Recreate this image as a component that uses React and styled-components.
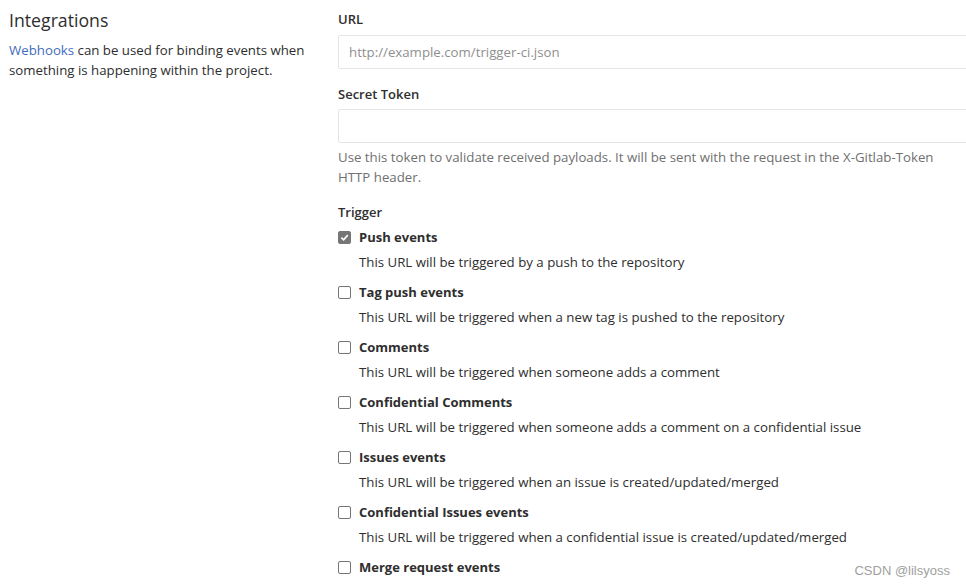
import React from "react";
import styled, { createGlobalStyle } from "styled-components";

const GlobalStyle = createGlobalStyle`
    html, body {
        margin: 0;
        padding: 0;
        background: #fff;
        overflow: hidden;
    }
    body {
        font-family: "Open Sans", "Noto Sans", sans-serif;
        font-size: 13.25px;
        color: #2e2e2e;
    }
`;

const Page = styled.div`
    display: grid;
    grid-template-columns: 329px 660px;
    padding-left: 9px;
    box-sizing: border-box;
    width: 966px;
    height: 586px;
    overflow: hidden;
    position: relative;
`;

const Aside = styled.div`
    padding-top: 8px;
`;

const Heading = styled.h4`
    margin: 0 0 8px;
    font-size: 17.7px;
    line-height: 24px;
    font-weight: 400;
    color: #2e2e2e;
`;

const Lead = styled.p`
    margin: 0;
    line-height: 20px;
    width: 310px;
`;

const Link = styled.a`
    color: #3f6dbf;
    text-decoration: none;
`;

const Form = styled.div`
    padding-top: 9px;
`;

const Group = styled.div`
    margin-bottom: 15px;
`;

const Label = styled.label`
    display: block;
    font-size: 13px;
    font-weight: 600;
    line-height: 20px;
    margin-bottom: ${(p) => p.$gap || 6}px;
`;

const Input = styled.input`
    display: block;
    box-sizing: border-box;
    width: 100%;
    height: 34px;
    padding: 0 10px;
    border: 1px solid #e5e5e5;
    border-radius: 2px;
    font-family: inherit;
    font-size: 13.25px;
    color: #2e2e2e;
    outline: none;
    &::placeholder {
        color: #8f8f8f;
    }
`;

const Help = styled.p`
    margin: 4px 0 0;
    line-height: 20px;
    color: #707070;
    width: 610px;
`;

const TriggerTitle = styled.div`
    font-size: 13px;
    font-weight: 600;
    line-height: 20px;
    margin-bottom: 5px;
`;

const Item = styled.div`
    margin-bottom: 10px;
`;

const ItemRow = styled.label`
    display: flex;
    align-items: center;
    gap: 8px;
    font-size: 13px;
    font-weight: 700;
    line-height: 20px;
    margin-bottom: 5px;
`;

const Box = styled.span`
    width: 13px;
    height: 13px;
    box-sizing: border-box;
    border-radius: 2px;
    border: 1px solid #767676;
    background: ${(p) => (p.$checked ? "#767676" : "#fff")};
    display: flex;
    align-items: center;
    justify-content: center;
    flex: none;
`;

const Desc = styled.div`
    padding-left: 21px;
    line-height: 20px;
`;

const Watermark = styled.div`
    position: absolute;
    right: 16px;
    bottom: 8px;
    font-family: "Liberation Sans", Arial, sans-serif;
    font-size: 13px;
    color: #a0a0a0;
    white-space: nowrap;
`;

const triggers = [
    { title: "Push events", desc: "This URL will be triggered by a push to the repository", checked: true },
    { title: "Tag push events", desc: "This URL will be triggered when a new tag is pushed to the repository" },
    { title: "Comments", desc: "This URL will be triggered when someone adds a comment" },
    { title: "Confidential Comments", desc: "This URL will be triggered when someone adds a comment on a confidential issue" },
    { title: "Issues events", desc: "This URL will be triggered when an issue is created/updated/merged" },
    { title: "Confidential Issues events", desc: "This URL will be triggered when a confidential issue is created/updated/merged" },
    { title: "Merge request events", desc: "This URL will be triggered when a merge request is created/updated/merged" },
];

const Check = () => (
    <svg width="9" height="9" viewBox="0 0 10 10">
        <path d="M1.5 5.2 L4 7.6 L8.6 2.4" fill="none" stroke="#fff" strokeWidth="1.8" />
    </svg>
);

const App = () => {
    return (
        <>
            <GlobalStyle />
            <Page>
                <Aside>
                    <Heading>Integrations</Heading>
                    <Lead>
                        <Link href="#">Webhooks</Link> can be used for binding events when something is happening within the project.
                    </Lead>
                </Aside>
                <Form>
                    <Group>
                        <Label>URL</Label>
                        <Input placeholder="http://example.com/trigger-ci.json" />
                    </Group>
                    <Group>
                        <Label $gap={5}>Secret Token</Label>
                        <Input />
                        <Help>
                            Use this token to validate received payloads. It will be sent with the request in the X-Gitlab-Token HTTP header.
                        </Help>
                    </Group>
                    <TriggerTitle>Trigger</TriggerTitle>
                    {triggers.map((t) => (
                        <Item key={t.title}>
                            <ItemRow>
                                <Box $checked={t.checked}>{t.checked && <Check />}</Box>
                                {t.title}
                            </ItemRow>
                            <Desc>{t.desc}</Desc>
                        </Item>
                    ))}
                </Form>
                <Watermark>CSDN @lilsyoss</Watermark>
            </Page>
        </>
    );
};

export default App;
